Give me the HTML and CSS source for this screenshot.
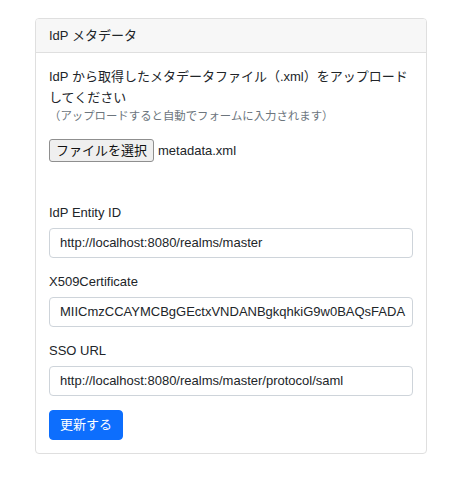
FILE: index.html
```html
<!DOCTYPE html>
<html lang="ja">
<head>
<meta charset="utf-8">
<link rel="stylesheet" href="styles.css">
</head>
<body>
<div class="card">
  <div class="card-header">IdP メタデータ</div>
  <div class="card-body">
    <div class="intro">
      <p class="lead-text">IdP から取得したメタデータファイル（.xml）をアップロードしてください</p>
      <p class="hint">（アップロードすると自動でフォームに入力されます）</p>
    </div>
    <div class="file-row">
      <span class="file-btn">ファイルを選択</span>
      <span class="file-name">metadata.xml</span>
    </div>
    <div class="field">
      <label class="field-label">IdP Entity ID</label>
      <div class="input">http://localhost:8080/realms/master</div>
    </div>
    <div class="field">
      <label class="field-label">X509Certificate</label>
      <div class="input">MIICmzCCAYMCBgGEctxVNDANBgkqhkiG9w0BAQsFADA</div>
    </div>
    <div class="field">
      <label class="field-label">SSO URL</label>
      <div class="input">http://localhost:8080/realms/master/protocol/saml</div>
    </div>
    <button class="btn-primary">更新する</button>
  </div>
</div>
</body>
</html>
```

FILE: styles.css
```css
* { box-sizing: border-box; }
html, body { margin: 0; padding: 0; background: #fff; }
body {
  padding: 18px 0 0 35px;
  font-family: "Liberation Sans", "Noto Sans CJK JP", sans-serif;
  font-size: 13px;
  color: #212529;
}
.card {
  width: 392px;
  border: 1px solid #dfdfdf;
  border-radius: 4px;
  overflow: hidden;
}
.card-header {
  background: #f7f7f7;
  border-bottom: 1px solid #dfdfdf;
  padding: 8px 13px;
  line-height: 17px;
}
.card-body {
  padding: 13px;
  display: flex;
  flex-direction: column;
  align-items: flex-start;
}
.intro { width: 100%; }
.lead-text {
  margin: 0;
  line-height: 21px;
}
.hint {
  margin: 0;
  font-size: 11.4px;
  line-height: 17px;
  color: #6c757d;
}
.file-row {
  display: flex;
  align-items: center;
  gap: 4px;
  margin-top: 14px;
  margin-bottom: 41px;
}
.file-btn {
  display: inline-block;
  height: 23px;
  line-height: 21px;
  padding: 0 6px;
  border: 1px solid #8f8f8f;
  border-radius: 3px;
  background: #efefef;
  color: #111;
  font-size: 13px;
}
.file-name { line-height: 23px; }
.field { width: 100%; margin-bottom: 14px; }
.field-label {
  display: block;
  line-height: 20px;
  margin-bottom: 5px;
}
.input {
  width: 100%;
  height: 30px;
  line-height: 28px;
  padding: 0 10px;
  border: 1px solid #ced4da;
  border-radius: 4px;
  white-space: nowrap;
  overflow: hidden;
}
.btn-primary {
  height: 30px;
  padding: 0 10px;
  border: 1px solid #0d6efd;
  border-radius: 4px;
  background: #0d6efd;
  color: #fff;
  font-family: "Liberation Sans", "Noto Sans CJK JP", sans-serif;
  font-size: 13px;
  line-height: 28px;
}
```
